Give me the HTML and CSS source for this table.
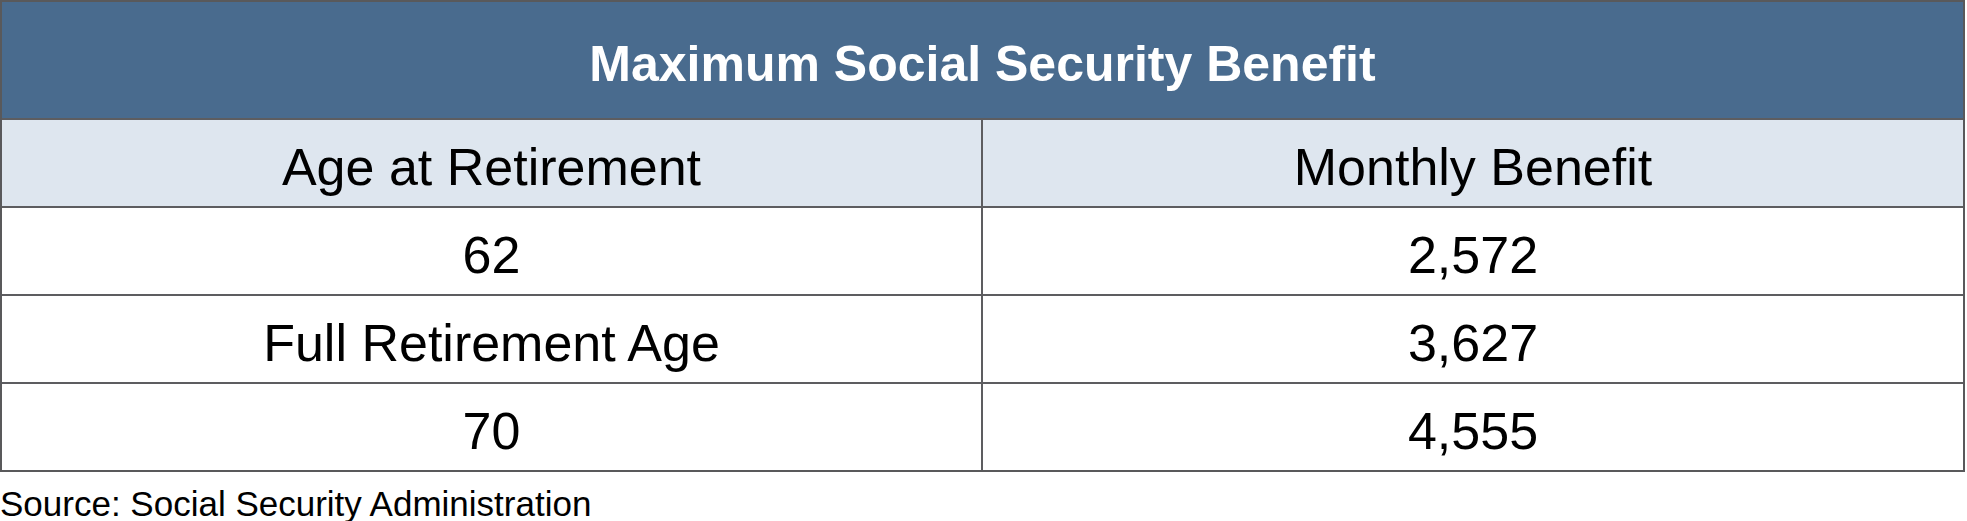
FILE: index.html
```html
<!DOCTYPE html>
<html lang="en">
<head>
<meta charset="utf-8">
<title>Maximum Social Security Benefit</title>
<link rel="stylesheet" href="styles.css">
</head>
<body>
<div class="benefit-table">
  <div class="title">Maximum Social Security Benefit</div>
  <div class="row head">
    <div class="cell">Age at Retirement</div>
    <div class="cell">Monthly Benefit</div>
  </div>
  <div class="row">
    <div class="cell">62</div>
    <div class="cell">2,572</div>
  </div>
  <div class="row">
    <div class="cell">Full Retirement Age</div>
    <div class="cell">3,627</div>
  </div>
  <div class="row">
    <div class="cell">70</div>
    <div class="cell">4,555</div>
  </div>
</div>
<p class="source">Source: Social Security Administration</p>
</body>
</html>
```

FILE: styles.css
```css
html, body {
  margin: 0;
  padding: 0;
  background: #ffffff;
}

body {
  font-family: "Liberation Sans", Arial, sans-serif;
  color: #000000;
  overflow: hidden;
}

.benefit-table {
  width: 1965px;
  box-sizing: border-box;
  border: 2px solid #59595b;
}

.title {
  height: 116px;
  box-sizing: border-box;
  padding-top: 7px;
  background: #496b8e;
  color: #ffffff;
  font-weight: bold;
  font-size: 50px;
  line-height: 1;
  display: flex;
  align-items: center;
  justify-content: center;
}

.row {
  display: grid;
  grid-template-columns: 979px 1fr;
  height: 88px;
  box-sizing: border-box;
  border-top: 2px solid #5d5d60;
}

.row.head {
  background: #dee6ef;
}

.cell {
  display: flex;
  align-items: center;
  justify-content: center;
  padding-top: 7px;
  box-sizing: border-box;
  font-size: 52px;
  line-height: 1;
}

.cell + .cell {
  border-left: 2px solid #5d5d60;
}

.source {
  margin: 12px 0 0 0;
  font-size: 35px;
  line-height: 40px;
  white-space: nowrap;
}
```
